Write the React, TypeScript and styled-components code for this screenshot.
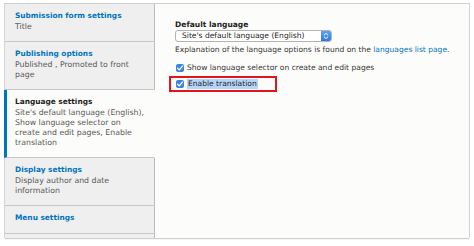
import React from 'react';
import styled, {createGlobalStyle} from 'styled-components';

interface ITabProps {
    active?: boolean;
}

const tabs = [
    {title: 'Submission form settings', summary: 'Title'},
    {title: 'Publishing options', summary: 'Published , Promoted to front page'},
    {title: 'Language settings', summary: "Site's default language (English), Show language selector on create and edit pages, Enable translation", active: true},
    {title: 'Display settings', summary: 'Display author and date information'},
    {title: 'Menu settings', summary: ''},
];

const Check = () => (
    <CheckBox>
        <svg width="8" height="8" viewBox="0 0 8 8">
            <path d="M1.6 4.2 L3.3 5.9 L6.5 2.1" fill="none" stroke="#fff" strokeWidth="1.3" strokeLinecap="round" strokeLinejoin="round" />
        </svg>
    </CheckBox>
);

export default function App() {
    return (
        <>
            <GlobalStyle />
            <Page>
                <Frame>
                    <TabList>
                        {tabs.map((t) => (
                            <Tab key={t.title} active={t.active}>
                                <TabTitle active={t.active}>{t.title}</TabTitle>
                                {t.summary && <TabSummary>{t.summary}</TabSummary>}
                            </Tab>
                        ))}
                        <TabFiller />
                    </TabList>
                    <Pane>
                        <Label>Default language</Label>
                        <Select>
                            <SelectText>Site's default language (English)</SelectText>
                            <Stepper>
                                <svg width="6" height="8" viewBox="0 0 6 8">
                                    <path d="M1.2 3 L3 1.3 L4.8 3 M1.2 5 L3 6.7 L4.8 5" fill="none" stroke="#fff" strokeWidth="1" strokeLinecap="round" />
                                </svg>
                            </Stepper>
                        </Select>
                        <Help>
                            Explanation of the language options is found on the <Link>languages list page</Link>.
                        </Help>
                        <CheckRow>
                            <Check />
                            <span>Show language selector on create and edit pages</span>
                        </CheckRow>
                        <Highlight>
                            <CheckRow>
                                <Check />
                                <Selected>Enable translation</Selected>
                            </CheckRow>
                        </Highlight>
                    </Pane>
                </Frame>
            </Page>
        </>
    );
}

const GlobalStyle = createGlobalStyle`
    body {
        margin: 0;
        background: #fff;
        font-family: "DejaVu Sans", Verdana, sans-serif;
    }
`;

const Page = styled.div`
    width: 474px;
    height: 246px;
    padding: 3px 4px 0 4px;
    box-sizing: border-box;
`;

const Frame = styled.div`
    display: flex;
    height: 235px;
    box-shadow: 0 2px 1px -1px #d0d0d0;
`;

const TabList = styled.div`
    width: 151px;
    display: flex;
    flex-direction: column;
    background: #efefef;
    border-top: 1px solid #cfcfcf;
    border-left: 1px solid #d6d6d6;
    box-sizing: border-box;
`;

const Tab = styled.div<ITabProps>`
    padding: 6px 8px 9px ${(p) => (p.active ? '8px' : '10px')};
    border-bottom: 1px solid #c8c8c8;
    border-right: ${(p) => (p.active ? '1px solid transparent' : '1px solid #bdbdbd')};
    border-left: ${(p) => (p.active ? '3px solid #0074bd' : 'none')};
    margin-left: ${(p) => (p.active ? '-1px' : '0')};
    background: ${(p) => (p.active ? '#fcfcfa' : '#efefef')};
`;

const TabTitle = styled.div<ITabProps>`
    font-size: 7.4px;
    line-height: 12px;
    font-weight: bold;
    color: ${(p) => (p.active ? '#222' : '#0074bd')};
`;

const TabSummary = styled.div`
    font-size: 7.8px;
    line-height: 10px;
    color: #595959;
`;

const TabFiller = styled.div`
    flex: 1;
    border-right: 1px solid #bdbdbd;
`;

const Pane = styled.div`
    flex: 1;
    background: #fcfcfa;
    border-top: 1px solid #cfcfcf;
    border-right: 1px solid #d6d6d6;
    padding: 16px 0 0 20px;
    font-size: 7.55px;
    color: #333;
`;

const Label = styled.div`
    font-weight: bold;
    line-height: 10px;
    color: #222;
`;

const Select = styled.div`
    width: 157px;
    height: 12px;
    display: flex;
    align-items: stretch;
    border: 1px solid #b4b4b4;
    border-radius: 3px;
    background: #fff;
    box-sizing: border-box;
    overflow: hidden;
`;

const SelectText = styled.div`
    flex: 1;
    padding-left: 6px;
    line-height: 10px;
    color: #222;
`;

const Stepper = styled.div`
    width: 10px;
    display: flex;
    align-items: center;
    justify-content: center;
    background: linear-gradient(#5aa2f4, #2d79e6);
`;

const Help = styled.div`
    margin-top: 3px;
    line-height: 10px;
    color: #333;
`;

const Link = styled.span`
    color: #0074bd;
`;

const CheckRow = styled.div`
    margin-top: 8px;
    display: flex;
    align-items: center;
    gap: 3px;
    line-height: 10px;
    padding-left: 1px;
`;

const CheckBox = styled.span`
    width: 8px;
    height: 8px;
    border-radius: 2px;
    background: #3a85df;
    display: inline-flex;
`;

const Highlight = styled.div`
    display: inline-block;
    margin: 3px 0 0 -6px;
    padding: 1px 17px 1px 5px;
    border: 2px solid #e0161b;
    ${CheckRow} {
        margin-top: 0;
        padding-left: 0;
    }
`;

const Selected = styled.span`
    background: #b5d5fb;
    color: #222;
    padding: 0 1px;
`;
